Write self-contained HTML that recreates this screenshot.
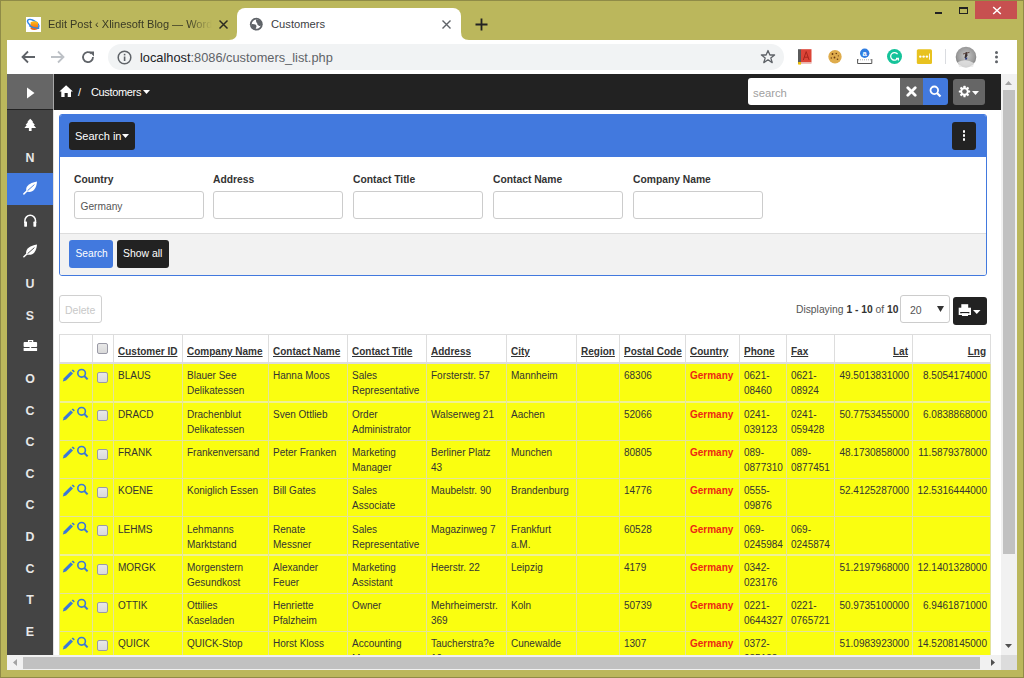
<!DOCTYPE html><html><head><meta charset="utf-8"><style>
*{margin:0;padding:0;box-sizing:border-box}
html,body{width:1024px;height:678px;overflow:hidden}
body{background:#bbb75c;font-family:"Liberation Sans", sans-serif;position:relative}
.ab{position:absolute}
.t{position:absolute;white-space:nowrap;line-height:1}
.sb{position:absolute;left:7px;width:46px;background:#444}
.sbl{position:absolute;left:0;width:46px;text-align:center;color:#e8e8e8;font-weight:bold;font-size:12.4px;line-height:1}
.lbl{position:absolute;font-weight:bold;font-size:10.3px;color:#333;white-space:nowrap;line-height:1}
.inp{position:absolute;top:191px;width:130px;height:28px;border:1px solid #ccc;border-radius:3px;background:#fff}
.cell{position:absolute;font-size:10px;color:#333;line-height:15px;white-space:nowrap}
.hd{position:absolute;font-size:10px;font-weight:bold;color:#333;text-decoration:underline;white-space:nowrap;line-height:1}
.cb{position:absolute;width:11px;height:11px;border:1px solid #9a9aa6;border-radius:2px;background:linear-gradient(#e8e8e8,#dadada)}
</style></head><body>

<div class="ab" style="left:0;top:0;width:1024px;height:1px;background:#8f8b47"></div>
<div class="ab" style="left:0;top:0;width:1px;height:678px;background:#8f8b47"></div>
<div class="ab" style="left:1023px;top:0;width:1px;height:678px;background:#8f8b47"></div>
<div class="ab" style="left:0;top:677px;width:1024px;height:1px;background:#8f8b47"></div>
<div class="ab" style="left:975px;top:1px;width:42px;height:18px;background:#c75050"></div>
<svg class="ab" style="left:991px;top:5px" width="12" height="11" viewBox="0 0 12 11"><path d="M2.2 2L9.8 9M9.8 2L2.2 9" stroke="#fff" stroke-width="1.5"/></svg>
<div class="ab" style="left:959px;top:7px;width:9px;height:7px;border:1px solid #222;border-top-width:2px"></div>
<div class="ab" style="left:935px;top:12px;width:7px;height:2px;background:#222"></div>
<div class="ab" style="left:26px;top:17px;width:15px;height:15px;background:#fff"></div>
<svg class="ab" style="left:26px;top:17px" width="15" height="15" viewBox="0 0 15 15"><defs><linearGradient id="fv" x1="0" y1="0" x2="0" y2="1"><stop offset="0" stop-color="#ffc21a"/><stop offset="0.5" stop-color="#f98a14"/><stop offset="1" stop-color="#ee5a10"/></linearGradient></defs><ellipse cx="7.2" cy="6.6" rx="6.4" ry="2.9" fill="none" stroke="#2f86e6" stroke-width="1.5" transform="rotate(30 7.2 6.6)"/><path d="M4.6 5.2Q8.3 3.4 12 5.2V12Q8.3 14 4.6 12Z" fill="url(#fv)"/><path d="M3.2 8.6Q8 11.6 13.2 11.2" fill="none" stroke="#2f86e6" stroke-width="1.5"/></svg>
<div class="t" style="left:48px;top:19px;font-size:11px;color:#3a3a25;width:164px;overflow:hidden;-webkit-mask-image:linear-gradient(90deg,#000 85%,transparent)">Edit Post ‹ Xlinesoft Blog — WordPress</div>
<svg class="ab" style="left:218px;top:19px" width="11" height="11" viewBox="0 0 11 11"><path d="M1.5 1.5L9.5 9.5M9.5 1.5L1.5 9.5" stroke="#2b2b20" stroke-width="1.5"/></svg>
<div class="ab" style="left:237px;top:8px;width:224px;height:33px;background:#fff;border-radius:8px 8px 0 0"></div>
<svg class="ab" style="left:229px;top:32px" width="8" height="8" viewBox="0 0 8 8"><path d="M0 8 Q8 8 8 0 L8 8Z" fill="#fff"/></svg>
<svg class="ab" style="left:461px;top:32px" width="8" height="8" viewBox="0 0 8 8"><path d="M8 8 Q0 8 0 0 L0 8Z" fill="#fff"/></svg>
<svg class="ab" style="left:249px;top:17px" width="15" height="15" viewBox="0 0 15 15"><circle cx="7.3" cy="7.2" r="6.4" fill="#5f6368"/><circle cx="7.3" cy="7.2" r="4.6" fill="#fff"/><path d="M7 2.2Q10.5 2.6 12.2 4.6L12.3 8.6Q10.6 9.4 9.6 8.4Q8 7.8 8.3 6.4Q6.8 5.4 7 3.6Z" fill="#5f6368"/><path d="M2.3 7Q4.8 6.6 6.4 7.6Q7.9 8.6 7.3 10.2Q6.5 10.9 7 12.2L4.6 11.8Q2.6 10 2.3 7Z" fill="#5f6368"/></svg>
<div class="t" style="left:271px;top:19px;font-size:11.2px;color:#3c4043">Customers</div>
<svg class="ab" style="left:441px;top:19px" width="11" height="11" viewBox="0 0 11 11"><path d="M1.5 1.5L9.5 9.5M9.5 1.5L1.5 9.5" stroke="#5f6368" stroke-width="1.4"/></svg>
<svg class="ab" style="left:475px;top:18px" width="13" height="13" viewBox="0 0 13 13"><path d="M6.5 0.5V12.5M0.5 6.5H12.5" stroke="#222" stroke-width="1.8"/></svg>
<div class="ab" style="left:7px;top:40px;width:1010px;height:34px;background:#fff"></div>
<svg class="ab" style="left:20px;top:49px" width="16" height="16" viewBox="0 0 16 16"><path d="M15 8H2.5M8 2.5L2.5 8L8 13.5" fill="none" stroke="#5f6368" stroke-width="1.8"/></svg>
<svg class="ab" style="left:50px;top:49px" width="16" height="16" viewBox="0 0 16 16"><path d="M1 8H13.5M8 2.5L13.5 8L8 13.5" fill="none" stroke="#bdc1c6" stroke-width="1.8"/></svg>
<svg class="ab" style="left:80px;top:49px" width="16" height="16" viewBox="0 0 16 16"><path d="M13 8A5 5 0 1 1 11.5 4.5" fill="none" stroke="#5f6368" stroke-width="1.8"/><path d="M9 2.5H14V7.5Z" fill="#5f6368"/></svg>
<div class="ab" style="left:108px;top:44px;width:676px;height:26px;background:#f1f3f4;border-radius:13px"></div>
<svg class="ab" style="left:117px;top:50px" width="15" height="15" viewBox="0 0 15 15"><circle cx="7.5" cy="7.5" r="6.3" fill="none" stroke="#5f6368" stroke-width="1.5"/><rect x="6.8" y="6.5" width="1.6" height="4.5" fill="#5f6368"/><rect x="6.8" y="3.8" width="1.6" height="1.6" fill="#5f6368"/></svg>
<div class="t" style="left:140px;top:52px;font-size:12.8px;color:#5f6368"><span style="color:#202124">localhost</span>:8086/customers_list.php</div>
<svg class="ab" style="left:760px;top:49px" width="16" height="16" viewBox="0 0 16 16"><path d="M8 1.5L9.9 6H14.6L10.8 8.9L12.2 13.6L8 10.8L3.8 13.6L5.2 8.9L1.4 6H6.1Z" fill="none" stroke="#5f6368" stroke-width="1.3" stroke-linejoin="round"/></svg>
<svg class="ab" style="left:797px;top:48px" width="16" height="17" viewBox="0 0 16 17"><rect x="1" y="1.2" width="3.2" height="14.6" fill="#5a5a5a"/><rect x="4" y="1.2" width="10.5" height="13.2" fill="#dc4437"/><path d="M6.3 12L9.2 3.6L12.1 12M7.3 9.2H11.1" fill="none" stroke="#a8261c" stroke-width="1"/><rect x="4" y="14.3" width="10.5" height="1.5" fill="#e9b5b0"/><rect x="1.2" y="14" width="2.8" height="2.6" fill="#f3c200"/></svg>
<svg class="ab" style="left:827px;top:49px" width="16" height="16" viewBox="0 0 16 16"><circle cx="8" cy="7.8" r="6.7" fill="#dfac4c"/><circle cx="5.5" cy="5" r="0.9" fill="#6b3b10"/><circle cx="9.3" cy="4.5" r="0.8" fill="#6b3b10"/><circle cx="7.5" cy="8.5" r="0.9" fill="#6b3b10"/><circle cx="4.3" cy="9" r="0.7" fill="#6b3b10"/><circle cx="10.5" cy="10.3" r="0.8" fill="#6b3b10"/><circle cx="11.3" cy="6.8" r="0.6" fill="#6b3b10"/></svg>
<svg class="ab" style="left:856px;top:48px" width="17" height="17" viewBox="0 0 17 17"><circle cx="8.7" cy="5.3" r="4.7" fill="#2f7de1"/><text x="8.7" y="7.9" font-size="7.5" font-family="Liberation Sans" font-weight="bold" fill="#fff" text-anchor="middle">a</text><path d="M1.6 11V15.5H15.8V11" fill="none" stroke="#555" stroke-width="1"/><path d="M2 11.8H15.4" stroke="#888" stroke-width="0.7" stroke-dasharray="1 1"/></svg>
<svg class="ab" style="left:886px;top:48px" width="17" height="17" viewBox="0 0 17 17"><circle cx="8.5" cy="8.5" r="7.5" fill="#15c39a"/><path d="M11.6 6.2A3.8 3.8 0 1 0 11.8 10.2" fill="none" stroke="#fff" stroke-width="1.3"/><path d="M10 10.4H12.4V12.6" fill="none" stroke="#fff" stroke-width="1.2"/></svg>
<svg class="ab" style="left:916px;top:48px" width="17" height="17" viewBox="0 0 17 17"><rect x="0.8" y="1.3" width="15.2" height="14.7" rx="1.5" fill="#e8c21f"/><circle cx="4.3" cy="8.6" r="1.2" fill="#fff"/><circle cx="7.6" cy="8.6" r="1.2" fill="#fff"/><circle cx="10.9" cy="8.6" r="1.2" fill="#fff"/><rect x="13" y="5.5" width="0.9" height="6.2" fill="#fff"/></svg>
<div class="ab" style="left:945px;top:49px;width:1px;height:15px;background:#dadce0"></div>
<svg class="ab" style="left:955px;top:46px" width="22" height="22" viewBox="0 0 22 22"><defs><radialGradient id="av" cx="50%" cy="45%" r="60%"><stop offset="0" stop-color="#c9c9c9"/><stop offset="0.7" stop-color="#9a9a9a"/><stop offset="1" stop-color="#6d6d6d"/></radialGradient></defs><circle cx="11" cy="11" r="10.3" fill="url(#av)"/><path d="M3 16Q11 12 19 17L18 21H4Z" fill="#e8e8e8" opacity="0.8"/><path d="M10.5 6.5L12 6L12.5 9.5L11 12L9.5 12Z" fill="#3a3030"/><path d="M8 8L14.5 6.3" stroke="#5a4038" stroke-width="0.9"/><path d="M10.3 11.8L12.3 11.6L12 13.5H10Z" fill="#2a3a80"/></svg>
<svg class="ab" style="left:994px;top:49px" width="5" height="16" viewBox="0 0 5 16"><circle cx="2.5" cy="3.6" r="1.5" fill="#5f6368"/><circle cx="2.5" cy="8.1" r="1.5" fill="#5f6368"/><circle cx="2.5" cy="12.8" r="1.5" fill="#5f6368"/></svg>
<div class="ab" style="left:7px;top:74px;width:1010px;height:596px;background:#fff"></div>
<div class="sb" style="top:74px;height:35px;background:#666"></div>
<div class="sb" style="top:109px;height:1px;background:#222"></div>
<div class="sb" style="top:110px;height:545px;background:#444"></div>
<div class="sb" style="top:173px;height:32px;background:#4279de"></div>
<div class="ab" style="left:53px;top:74px;width:1px;height:581px;background:#e2e2e2"></div><div class="ab" style="left:53px;top:74px;width:1px;height:36px;background:#a8a8a8"></div>
<svg class="ab" style="left:26px;top:87px" width="9" height="12" viewBox="0 0 9 12"><path d="M1 0.5L8.5 6L1 11.5Z" fill="#fff"/></svg>
<div class="sbl" style="left:7px;top:151.8px">N</div>
<div class="sbl" style="left:7px;top:278.2px">U</div>
<div class="sbl" style="left:7px;top:309.8px">S</div>
<div class="sbl" style="left:7px;top:373.0px">O</div>
<div class="sbl" style="left:7px;top:404.6px">C</div>
<div class="sbl" style="left:7px;top:436.2px">C</div>
<div class="sbl" style="left:7px;top:467.8px">C</div>
<div class="sbl" style="left:7px;top:499.4px">C</div>
<div class="sbl" style="left:7px;top:531.0px">D</div>
<div class="sbl" style="left:7px;top:562.6px">C</div>
<div class="sbl" style="left:7px;top:594.2px">T</div>
<div class="sbl" style="left:7px;top:625.8px">E</div>
<svg class="ab" style="left:23px;top:117.8px" width="15" height="15" viewBox="0 0 15 15"><path d="M7.25 0.8L10.2 3.8H9.3L11.9 6.9H10.7L13.1 10H8.6V13H5.9V10H1.4L3.8 6.9H2.6L5.2 3.8H4.3Z" fill="#fff"/></svg>
<svg class="ab" style="left:23px;top:181.0px" width="15" height="15" viewBox="0 0 15 15"><path d="M3.6 10.6C1.8 6 5.5 2.2 14 0.6C13.4 8.8 9 12.4 3.6 10.6Z" fill="#fff"/><path d="M0.9 12.9L5.2 8.8" stroke="#fff" stroke-width="1.5" stroke-linecap="round"/><path d="M4.6 9.6L11.4 3.6" stroke="#4279de" stroke-width="0.9"/></svg>
<svg class="ab" style="left:23px;top:244.2px" width="15" height="15" viewBox="0 0 15 15"><path d="M3.6 10.4C1.8 5.8 5.5 2 14 0.4C13.4 8.6 9 12.2 3.6 10.4Z" fill="#fff"/><path d="M0.9 12.7L5.2 8.8" stroke="#fff" stroke-width="1.5" stroke-linecap="round"/><path d="M4.6 9.6L11.4 3.6" stroke="#444" stroke-width="0.9"/></svg>
<svg class="ab" style="left:23px;top:212.6px" width="15" height="15" viewBox="0 0 15 15"><path d="M1.9 10V7.6A5.3 5.3 0 0 1 12.5 7.6V10" fill="none" stroke="#fff" stroke-width="1.5"/><rect x="1.2" y="8.6" width="2.8" height="5.1" rx="0.6" fill="#fff"/><rect x="10.4" y="8.6" width="2.8" height="5.1" rx="0.6" fill="#fff"/></svg>
<svg class="ab" style="left:23px;top:339.0px" width="15" height="15" viewBox="0 0 15 15"><path d="M5.6 3.2V1.6H9.6V3.2" fill="none" stroke="#fff" stroke-width="1.3"/><rect x="0.6" y="3.1" width="13.5" height="5" rx="0.8" fill="#fff"/><rect x="0.6" y="9" width="13.5" height="3" rx="0.6" fill="#fff"/><rect x="6.6" y="7.6" width="1.6" height="1.6" fill="#fff"/></svg>
<div class="ab" style="left:54px;top:74px;width:947px;height:36px;background:#222"></div>
<svg class="ab" style="left:58.5px;top:85px" width="14.5" height="12" viewBox="0 0 14.5 12"><path d="M7.1 0.2L0.4 6.4H2.3V11.9H5.6V8H8.7V11.9H12V6.4H13.9Z" fill="#fff"/></svg>
<div class="t" style="left:78px;top:87px;font-size:11px;color:#fff">/</div>
<div class="t" style="left:91px;top:87px;font-size:11px;color:#fff;letter-spacing:-0.35px">Customers</div>
<svg class="ab" style="left:143px;top:90px" width="7" height="4" viewBox="0 0 7 4"><path d="M0 0H7L3.5 4Z" fill="#fff"/></svg>
<div class="ab" style="left:748px;top:78px;width:152px;height:27px;background:#fff;border-radius:3px 0 0 3px"></div>
<div class="t" style="left:753px;top:88px;font-size:11.3px;color:#a0a0a0">search</div>
<div class="ab" style="left:900px;top:78px;width:23px;height:27px;background:#666"></div>
<svg class="ab" style="left:906px;top:86px" width="11" height="11" viewBox="0 0 11 11"><path d="M1.8 1.8L9.2 9.2M9.2 1.8L1.8 9.2" stroke="#fff" stroke-width="2.8" stroke-linecap="round"/></svg>
<div class="ab" style="left:923px;top:78px;width:25px;height:27px;background:#4279de;border-radius:0 3px 3px 0"></div>
<svg class="ab" style="left:929px;top:85px" width="13" height="13" viewBox="0 0 13 13"><circle cx="5.3" cy="5.3" r="3.8" fill="none" stroke="#fff" stroke-width="1.8"/><path d="M8 8L11.5 11.5" stroke="#fff" stroke-width="2.2"/></svg>
<div class="ab" style="left:953px;top:79px;width:32px;height:26px;background:#666;border-radius:3px"></div>
<svg class="ab" style="left:957.5px;top:85px" width="13" height="13" viewBox="0 0 13 13"><rect x="5.4" y="0.8" width="2.2" height="11.4" rx="0.5" fill="#fff" transform="rotate(0 6.5 6.5)"/><rect x="5.4" y="0.8" width="2.2" height="11.4" rx="0.5" fill="#fff" transform="rotate(45 6.5 6.5)"/><rect x="5.4" y="0.8" width="2.2" height="11.4" rx="0.5" fill="#fff" transform="rotate(90 6.5 6.5)"/><rect x="5.4" y="0.8" width="2.2" height="11.4" rx="0.5" fill="#fff" transform="rotate(135 6.5 6.5)"/><circle cx="6.5" cy="6.5" r="4.2" fill="#fff"/><circle cx="6.5" cy="6.5" r="2.3" fill="#666"/></svg>
<svg class="ab" style="left:972px;top:91px" width="7" height="4" viewBox="0 0 7 4"><path d="M0 0H7L3.5 4Z" fill="#fff"/></svg>
<div class="ab" style="left:59px;top:114px;width:928px;height:162px;border:1px solid #4279de;border-radius:3px;background:#fff;overflow:hidden"><div class="ab" style="left:0;top:0;width:926px;height:42px;background:#4279de"></div><div class="ab" style="left:0;top:118px;width:926px;height:42px;background:#f2f2f2;border-top:1px solid #ddd"></div></div>
<div class="ab" style="left:69px;top:122px;width:66px;height:28px;background:#222;border-radius:3px"></div>
<div class="t" style="left:75px;top:131px;font-size:11px;color:#fff">Search in</div>
<svg class="ab" style="left:122px;top:134px" width="7" height="4" viewBox="0 0 7 4"><path d="M0 0H7L3.5 4Z" fill="#fff"/></svg>
<div class="ab" style="left:952px;top:122px;width:24px;height:28px;background:#222;border-radius:3px"></div>
<div class="ab" style="left:962.7px;top:130.2px;width:2.6px;height:2.6px;border-radius:50%;background:#fff"></div>
<div class="ab" style="left:962.7px;top:134.2px;width:2.6px;height:2.6px;border-radius:50%;background:#fff"></div>
<div class="ab" style="left:962.7px;top:138.2px;width:2.6px;height:2.6px;border-radius:50%;background:#fff"></div>
<div class="lbl" style="left:74px;top:174.5px">Country</div>
<div class="inp" style="left:74px"></div>
<div class="lbl" style="left:213px;top:174.5px">Address</div>
<div class="inp" style="left:213px"></div>
<div class="lbl" style="left:353px;top:174.5px">Contact Title</div>
<div class="inp" style="left:353px"></div>
<div class="lbl" style="left:493px;top:174.5px">Contact Name</div>
<div class="inp" style="left:493px"></div>
<div class="lbl" style="left:633px;top:174.5px">Company Name</div>
<div class="inp" style="left:633px"></div>
<div class="t" style="left:80.5px;top:201.5px;font-size:10.2px;color:#555">Germany</div>
<div class="ab" style="left:69px;top:240px;width:44px;height:28px;background:#4279de;border-radius:3px"></div>
<div class="t" style="left:75.5px;top:249px;font-size:10.2px;color:#fff">Search</div>
<div class="ab" style="left:117px;top:240px;width:52px;height:28px;background:#222;border-radius:3px"></div>
<div class="t" style="left:123px;top:249px;font-size:10.4px;color:#fff">Show all</div>
<div class="ab" style="left:59px;top:295px;width:43px;height:28px;border:1px solid #d0d0d0;border-radius:3px"></div>
<div class="t" style="left:65px;top:305px;font-size:10.5px;color:#c8c8c8">Delete</div>
<div class="t" style="left:796px;top:305px;font-size:10.3px;color:#555">Displaying <b style="color:#333">1 - 10</b> of <b style="color:#333">10</b></div>
<div class="ab" style="left:900px;top:295px;width:50px;height:28px;border:1px solid #ccc;border-radius:3px;background:#fff"></div>
<div class="t" style="left:910px;top:305px;font-size:10.5px;color:#555">20</div>
<svg class="ab" style="left:937px;top:306px" width="7" height="6" viewBox="0 0 7 6"><path d="M0 0H7L3.5 6Z" fill="#333"/></svg>
<div class="ab" style="left:953px;top:297px;width:34px;height:28px;background:#222;border-radius:3px"></div>
<svg class="ab" style="left:958px;top:303px" width="14" height="14" viewBox="0 0 14 14"><rect x="3.3" y="1.2" width="6.9" height="4.5" fill="#fff"/><rect x="0.7" y="4.7" width="12.3" height="7.3" fill="#fff"/><rect x="2.2" y="9" width="9.2" height="1.3" fill="#222"/><rect x="3.8" y="10.3" width="6.2" height="2.7" fill="#fff"/><rect x="0.7" y="12" width="3.1" height="1" fill="#222"/><rect x="10" y="12" width="3" height="1" fill="#222"/></svg>
<svg class="ab" style="left:973px;top:310px" width="7.5" height="4" viewBox="0 0 7.5 4"><path d="M0 0H7.5L3.75 4Z" fill="#fff"/></svg>
<div class="ab" style="left:59px;top:364px;width:932px;height:291px;background:#fafe10"></div>
<div class="ab" style="left:59px;top:334px;width:932px;height:1px;background:#ddd"></div>
<div class="ab" style="left:59px;top:362px;width:932px;height:2px;background:#ddd"></div>
<div class="ab" style="left:59px;top:401px;width:932px;height:2px;background:#eff194"></div>
<div class="ab" style="left:59px;top:440px;width:932px;height:1px;background:#e3e39d"></div>
<div class="ab" style="left:59px;top:478px;width:932px;height:1px;background:#e3e39d"></div>
<div class="ab" style="left:59px;top:516px;width:932px;height:1px;background:#e3e39d"></div>
<div class="ab" style="left:59px;top:554px;width:932px;height:2px;background:#eff194"></div>
<div class="ab" style="left:59px;top:593px;width:932px;height:1px;background:#e3e39d"></div>
<div class="ab" style="left:59px;top:631px;width:932px;height:1px;background:#e3e39d"></div>
<div class="ab" style="left:59px;top:334px;width:1px;height:29px;background:#ddd"></div>
<div class="ab" style="left:59px;top:364px;width:1px;height:291px;background:#e3e39d"></div>
<div class="ab" style="left:92px;top:334px;width:1px;height:29px;background:#ddd"></div>
<div class="ab" style="left:92px;top:364px;width:1px;height:291px;background:#e3e39d"></div>
<div class="ab" style="left:113px;top:334px;width:1px;height:29px;background:#ddd"></div>
<div class="ab" style="left:113px;top:364px;width:1px;height:291px;background:#e3e39d"></div>
<div class="ab" style="left:182px;top:334px;width:1px;height:29px;background:#ddd"></div>
<div class="ab" style="left:182px;top:364px;width:1px;height:291px;background:#e3e39d"></div>
<div class="ab" style="left:268px;top:334px;width:1px;height:29px;background:#ddd"></div>
<div class="ab" style="left:268px;top:364px;width:1px;height:291px;background:#e3e39d"></div>
<div class="ab" style="left:347px;top:334px;width:1px;height:29px;background:#ddd"></div>
<div class="ab" style="left:347px;top:364px;width:1px;height:291px;background:#e3e39d"></div>
<div class="ab" style="left:426px;top:334px;width:1px;height:29px;background:#ddd"></div>
<div class="ab" style="left:426px;top:364px;width:1px;height:291px;background:#e3e39d"></div>
<div class="ab" style="left:506px;top:334px;width:1px;height:29px;background:#ddd"></div>
<div class="ab" style="left:506px;top:364px;width:1px;height:291px;background:#e3e39d"></div>
<div class="ab" style="left:576px;top:334px;width:1px;height:29px;background:#ddd"></div>
<div class="ab" style="left:576px;top:364px;width:1px;height:291px;background:#e3e39d"></div>
<div class="ab" style="left:619px;top:334px;width:1px;height:29px;background:#ddd"></div>
<div class="ab" style="left:619px;top:364px;width:1px;height:291px;background:#e3e39d"></div>
<div class="ab" style="left:685px;top:334px;width:1px;height:29px;background:#ddd"></div>
<div class="ab" style="left:685px;top:364px;width:1px;height:291px;background:#e3e39d"></div>
<div class="ab" style="left:739px;top:334px;width:1px;height:29px;background:#ddd"></div>
<div class="ab" style="left:739px;top:364px;width:1px;height:291px;background:#e3e39d"></div>
<div class="ab" style="left:786px;top:334px;width:1px;height:29px;background:#ddd"></div>
<div class="ab" style="left:786px;top:364px;width:1px;height:291px;background:#e3e39d"></div>
<div class="ab" style="left:834px;top:334px;width:1px;height:29px;background:#ddd"></div>
<div class="ab" style="left:834px;top:364px;width:1px;height:291px;background:#e3e39d"></div>
<div class="ab" style="left:912px;top:334px;width:1px;height:29px;background:#ddd"></div>
<div class="ab" style="left:912px;top:364px;width:1px;height:291px;background:#e3e39d"></div>
<div class="ab" style="left:990px;top:334px;width:1px;height:29px;background:#ddd"></div>
<div class="ab" style="left:990px;top:364px;width:1px;height:291px;background:#e3e39d"></div>
<div class="hd" style="left:118px;top:346.8px">Customer ID</div>
<div class="hd" style="left:187px;top:346.8px">Company Name</div>
<div class="hd" style="left:273px;top:346.8px">Contact Name</div>
<div class="hd" style="left:352px;top:346.8px">Contact Title</div>
<div class="hd" style="left:431px;top:346.8px">Address</div>
<div class="hd" style="left:511px;top:346.8px">City</div>
<div class="hd" style="left:581px;top:346.8px">Region</div>
<div class="hd" style="left:624px;top:346.8px">Postal Code</div>
<div class="hd" style="left:690px;top:346.8px">Country</div>
<div class="hd" style="left:744px;top:346.8px">Phone</div>
<div class="hd" style="left:791px;top:346.8px">Fax</div>
<div class="hd" style="right:116px;top:346.8px">Lat</div>
<div class="hd" style="right:38px;top:346.8px">Lng</div>
<div class="cb" style="left:97px;top:343px"></div>
<div class="ab" style="left:0;top:0;width:1024px;height:655px;overflow:hidden">
<svg class="ab" style="left:62px;top:369px" width="14" height="14" viewBox="0 0 14 14"><path d="M0.8 12.4L1.8 9.2L8.8 2.2L11 4.4L4 11.4Z" fill="#3b78d8"/><path d="M9.6 1.4L10.9 0.4L12.8 2.3L11.8 3.6Z" fill="#3b78d8"/></svg>
<svg class="ab" style="left:76px;top:368px" width="14" height="14" viewBox="0 0 14 14"><circle cx="5.6" cy="5.3" r="3.8" fill="none" stroke="#3b78d8" stroke-width="1.6"/><path d="M8.3 8L11.6 11.4" stroke="#3b78d8" stroke-width="2"/></svg>
<div class="cb" style="left:97px;top:372px"></div>
<div class="cell" style="left:118px;top:368.2px">BLAUS</div>
<div class="cell" style="left:187px;top:368.2px">Blauer See<br>Delikatessen</div>
<div class="cell" style="left:273px;top:368.2px">Hanna Moos</div>
<div class="cell" style="left:352px;top:368.2px">Sales<br>Representative</div>
<div class="cell" style="left:431px;top:368.2px">Forsterstr. 57</div>
<div class="cell" style="left:511px;top:368.2px">Mannheim</div>
<div class="cell" style="left:624px;top:368.2px">68306</div>
<div class="cell" style="left:690px;top:368.2px"><b style="color:#ec2814">Germany</b></div>
<div class="cell" style="left:744px;top:368.2px">0621-<br>08460</div>
<div class="cell" style="left:791px;top:368.2px">0621-<br>08924</div>
<div class="cell" style="right:115px;top:368.2px;text-align:right">49.5013831000</div>
<div class="cell" style="right:37px;top:368.2px;text-align:right">8.5054174000</div>
<svg class="ab" style="left:62px;top:408px" width="14" height="14" viewBox="0 0 14 14"><path d="M0.8 12.4L1.8 9.2L8.8 2.2L11 4.4L4 11.4Z" fill="#3b78d8"/><path d="M9.6 1.4L10.9 0.4L12.8 2.3L11.8 3.6Z" fill="#3b78d8"/></svg>
<svg class="ab" style="left:76px;top:406px" width="14" height="14" viewBox="0 0 14 14"><circle cx="5.6" cy="5.3" r="3.8" fill="none" stroke="#3b78d8" stroke-width="1.6"/><path d="M8.3 8L11.6 11.4" stroke="#3b78d8" stroke-width="2"/></svg>
<div class="cb" style="left:97px;top:410px"></div>
<div class="cell" style="left:118px;top:406.7px">DRACD</div>
<div class="cell" style="left:187px;top:406.7px">Drachenblut<br>Delikatessen</div>
<div class="cell" style="left:273px;top:406.7px">Sven Ottlieb</div>
<div class="cell" style="left:352px;top:406.7px">Order<br>Administrator</div>
<div class="cell" style="left:431px;top:406.7px">Walserweg 21</div>
<div class="cell" style="left:511px;top:406.7px">Aachen</div>
<div class="cell" style="left:624px;top:406.7px">52066</div>
<div class="cell" style="left:690px;top:406.7px"><b style="color:#ec2814">Germany</b></div>
<div class="cell" style="left:744px;top:406.7px">0241-<br>039123</div>
<div class="cell" style="left:791px;top:406.7px">0241-<br>059428</div>
<div class="cell" style="right:115px;top:406.7px;text-align:right">50.7753455000</div>
<div class="cell" style="right:37px;top:406.7px;text-align:right">6.0838868000</div>
<svg class="ab" style="left:62px;top:446px" width="14" height="14" viewBox="0 0 14 14"><path d="M0.8 12.4L1.8 9.2L8.8 2.2L11 4.4L4 11.4Z" fill="#3b78d8"/><path d="M9.6 1.4L10.9 0.4L12.8 2.3L11.8 3.6Z" fill="#3b78d8"/></svg>
<svg class="ab" style="left:76px;top:445px" width="14" height="14" viewBox="0 0 14 14"><circle cx="5.6" cy="5.3" r="3.8" fill="none" stroke="#3b78d8" stroke-width="1.6"/><path d="M8.3 8L11.6 11.4" stroke="#3b78d8" stroke-width="2"/></svg>
<div class="cb" style="left:97px;top:449px"></div>
<div class="cell" style="left:118px;top:445.2px">FRANK</div>
<div class="cell" style="left:187px;top:445.2px">Frankenversand</div>
<div class="cell" style="left:273px;top:445.2px">Peter Franken</div>
<div class="cell" style="left:352px;top:445.2px">Marketing<br>Manager</div>
<div class="cell" style="left:431px;top:445.2px">Berliner Platz<br>43</div>
<div class="cell" style="left:511px;top:445.2px">Munchen</div>
<div class="cell" style="left:624px;top:445.2px">80805</div>
<div class="cell" style="left:690px;top:445.2px"><b style="color:#ec2814">Germany</b></div>
<div class="cell" style="left:744px;top:445.2px">089-<br>0877310</div>
<div class="cell" style="left:791px;top:445.2px">089-<br>0877451</div>
<div class="cell" style="right:115px;top:445.2px;text-align:right">48.1730858000</div>
<div class="cell" style="right:37px;top:445.2px;text-align:right">11.5879378000</div>
<svg class="ab" style="left:62px;top:484px" width="14" height="14" viewBox="0 0 14 14"><path d="M0.8 12.4L1.8 9.2L8.8 2.2L11 4.4L4 11.4Z" fill="#3b78d8"/><path d="M9.6 1.4L10.9 0.4L12.8 2.3L11.8 3.6Z" fill="#3b78d8"/></svg>
<svg class="ab" style="left:76px;top:483px" width="14" height="14" viewBox="0 0 14 14"><circle cx="5.6" cy="5.3" r="3.8" fill="none" stroke="#3b78d8" stroke-width="1.6"/><path d="M8.3 8L11.6 11.4" stroke="#3b78d8" stroke-width="2"/></svg>
<div class="cb" style="left:97px;top:487px"></div>
<div class="cell" style="left:118px;top:483.4px">KOENE</div>
<div class="cell" style="left:187px;top:483.4px">Koniglich Essen</div>
<div class="cell" style="left:273px;top:483.4px">Bill Gates</div>
<div class="cell" style="left:352px;top:483.4px">Sales<br>Associate</div>
<div class="cell" style="left:431px;top:483.4px">Maubelstr. 90</div>
<div class="cell" style="left:511px;top:483.4px">Brandenburg</div>
<div class="cell" style="left:624px;top:483.4px">14776</div>
<div class="cell" style="left:690px;top:483.4px"><b style="color:#ec2814">Germany</b></div>
<div class="cell" style="left:744px;top:483.4px">0555-<br>09876</div>
<div class="cell" style="right:115px;top:483.4px;text-align:right">52.4125287000</div>
<div class="cell" style="right:37px;top:483.4px;text-align:right">12.5316444000</div>
<svg class="ab" style="left:62px;top:522px" width="14" height="14" viewBox="0 0 14 14"><path d="M0.8 12.4L1.8 9.2L8.8 2.2L11 4.4L4 11.4Z" fill="#3b78d8"/><path d="M9.6 1.4L10.9 0.4L12.8 2.3L11.8 3.6Z" fill="#3b78d8"/></svg>
<svg class="ab" style="left:76px;top:521px" width="14" height="14" viewBox="0 0 14 14"><circle cx="5.6" cy="5.3" r="3.8" fill="none" stroke="#3b78d8" stroke-width="1.6"/><path d="M8.3 8L11.6 11.4" stroke="#3b78d8" stroke-width="2"/></svg>
<div class="cb" style="left:97px;top:525px"></div>
<div class="cell" style="left:118px;top:521.5px">LEHMS</div>
<div class="cell" style="left:187px;top:521.5px">Lehmanns<br>Marktstand</div>
<div class="cell" style="left:273px;top:521.5px">Renate<br>Messner</div>
<div class="cell" style="left:352px;top:521.5px">Sales<br>Representative</div>
<div class="cell" style="left:431px;top:521.5px">Magazinweg 7</div>
<div class="cell" style="left:511px;top:521.5px">Frankfurt<br>a.M.</div>
<div class="cell" style="left:624px;top:521.5px">60528</div>
<div class="cell" style="left:690px;top:521.5px"><b style="color:#ec2814">Germany</b></div>
<div class="cell" style="left:744px;top:521.5px">069-<br>0245984</div>
<div class="cell" style="left:791px;top:521.5px">069-<br>0245874</div>
<svg class="ab" style="left:62px;top:560px" width="14" height="14" viewBox="0 0 14 14"><path d="M0.8 12.4L1.8 9.2L8.8 2.2L11 4.4L4 11.4Z" fill="#3b78d8"/><path d="M9.6 1.4L10.9 0.4L12.8 2.3L11.8 3.6Z" fill="#3b78d8"/></svg>
<svg class="ab" style="left:76px;top:560px" width="14" height="14" viewBox="0 0 14 14"><circle cx="5.6" cy="5.3" r="3.8" fill="none" stroke="#3b78d8" stroke-width="1.6"/><path d="M8.3 8L11.6 11.4" stroke="#3b78d8" stroke-width="2"/></svg>
<div class="cb" style="left:97px;top:564px"></div>
<div class="cell" style="left:118px;top:559.7px">MORGK</div>
<div class="cell" style="left:187px;top:559.7px">Morgenstern<br>Gesundkost</div>
<div class="cell" style="left:273px;top:559.7px">Alexander<br>Feuer</div>
<div class="cell" style="left:352px;top:559.7px">Marketing<br>Assistant</div>
<div class="cell" style="left:431px;top:559.7px">Heerstr. 22</div>
<div class="cell" style="left:511px;top:559.7px">Leipzig</div>
<div class="cell" style="left:624px;top:559.7px">4179</div>
<div class="cell" style="left:690px;top:559.7px"><b style="color:#ec2814">Germany</b></div>
<div class="cell" style="left:744px;top:559.7px">0342-<br>023176</div>
<div class="cell" style="right:115px;top:559.7px;text-align:right">51.2197968000</div>
<div class="cell" style="right:37px;top:559.7px;text-align:right">12.1401328000</div>
<svg class="ab" style="left:62px;top:599px" width="14" height="14" viewBox="0 0 14 14"><path d="M0.8 12.4L1.8 9.2L8.8 2.2L11 4.4L4 11.4Z" fill="#3b78d8"/><path d="M9.6 1.4L10.9 0.4L12.8 2.3L11.8 3.6Z" fill="#3b78d8"/></svg>
<svg class="ab" style="left:76px;top:598px" width="14" height="14" viewBox="0 0 14 14"><circle cx="5.6" cy="5.3" r="3.8" fill="none" stroke="#3b78d8" stroke-width="1.6"/><path d="M8.3 8L11.6 11.4" stroke="#3b78d8" stroke-width="2"/></svg>
<div class="cb" style="left:97px;top:602px"></div>
<div class="cell" style="left:118px;top:597.9px">OTTIK</div>
<div class="cell" style="left:187px;top:597.9px">Ottilies<br>Kaseladen</div>
<div class="cell" style="left:273px;top:597.9px">Henriette<br>Pfalzheim</div>
<div class="cell" style="left:352px;top:597.9px">Owner</div>
<div class="cell" style="left:431px;top:597.9px">Mehrheimerstr.<br>369</div>
<div class="cell" style="left:511px;top:597.9px">Koln</div>
<div class="cell" style="left:624px;top:597.9px">50739</div>
<div class="cell" style="left:690px;top:597.9px"><b style="color:#ec2814">Germany</b></div>
<div class="cell" style="left:744px;top:597.9px">0221-<br>0644327</div>
<div class="cell" style="left:791px;top:597.9px">0221-<br>0765721</div>
<div class="cell" style="right:115px;top:597.9px;text-align:right">50.9735100000</div>
<div class="cell" style="right:37px;top:597.9px;text-align:right">6.9461871000</div>
<svg class="ab" style="left:62px;top:637px" width="14" height="14" viewBox="0 0 14 14"><path d="M0.8 12.4L1.8 9.2L8.8 2.2L11 4.4L4 11.4Z" fill="#3b78d8"/><path d="M9.6 1.4L10.9 0.4L12.8 2.3L11.8 3.6Z" fill="#3b78d8"/></svg>
<svg class="ab" style="left:76px;top:636px" width="14" height="14" viewBox="0 0 14 14"><circle cx="5.6" cy="5.3" r="3.8" fill="none" stroke="#3b78d8" stroke-width="1.6"/><path d="M8.3 8L11.6 11.4" stroke="#3b78d8" stroke-width="2"/></svg>
<div class="cb" style="left:97px;top:640px"></div>
<div class="cell" style="left:118px;top:636.2px">QUICK</div>
<div class="cell" style="left:187px;top:636.2px">QUICK-Stop</div>
<div class="cell" style="left:273px;top:636.2px">Horst Kloss</div>
<div class="cell" style="left:352px;top:636.2px">Accounting<br>Manager</div>
<div class="cell" style="left:431px;top:636.2px">Taucherstra?e<br>10</div>
<div class="cell" style="left:511px;top:636.2px">Cunewalde</div>
<div class="cell" style="left:624px;top:636.2px">1307</div>
<div class="cell" style="left:690px;top:636.2px"><b style="color:#ec2814">Germany</b></div>
<div class="cell" style="left:744px;top:636.2px">0372-<br>035188</div>
<div class="cell" style="right:115px;top:636.2px;text-align:right">51.0983923000</div>
<div class="cell" style="right:37px;top:636.2px;text-align:right">14.5208145000</div>
</div>
<div class="ab" style="left:1001px;top:74px;width:16px;height:581px;background:#f1f1f1"></div>
<div class="ab" style="left:1003px;top:90px;width:12px;height:464px;background:#c1c1c1"></div>
<svg class="ab" style="left:1005px;top:81px" width="7" height="4" viewBox="0 0 7 4"><path d="M0 4H7L3.5 0Z" fill="#a3a3a3"/></svg>
<svg class="ab" style="left:1005px;top:644px" width="7" height="4" viewBox="0 0 7 4"><path d="M0 0H7L3.5 4Z" fill="#505050"/></svg>
<div class="ab" style="left:7px;top:655px;width:994px;height:15px;background:#f1f1f1"></div>
<div class="ab" style="left:23px;top:657px;width:957px;height:12px;background:#c1c1c1"></div>
<svg class="ab" style="left:13px;top:659px" width="4" height="7" viewBox="0 0 4 7"><path d="M4 0V7L0 3.5Z" fill="#a3a3a3"/></svg>
<svg class="ab" style="left:991px;top:659px" width="4" height="7" viewBox="0 0 4 7"><path d="M0 0V7L4 3.5Z" fill="#505050"/></svg>
<div class="ab" style="left:1001px;top:655px;width:16px;height:15px;background:#dcdcdc"></div>
</body></html>
